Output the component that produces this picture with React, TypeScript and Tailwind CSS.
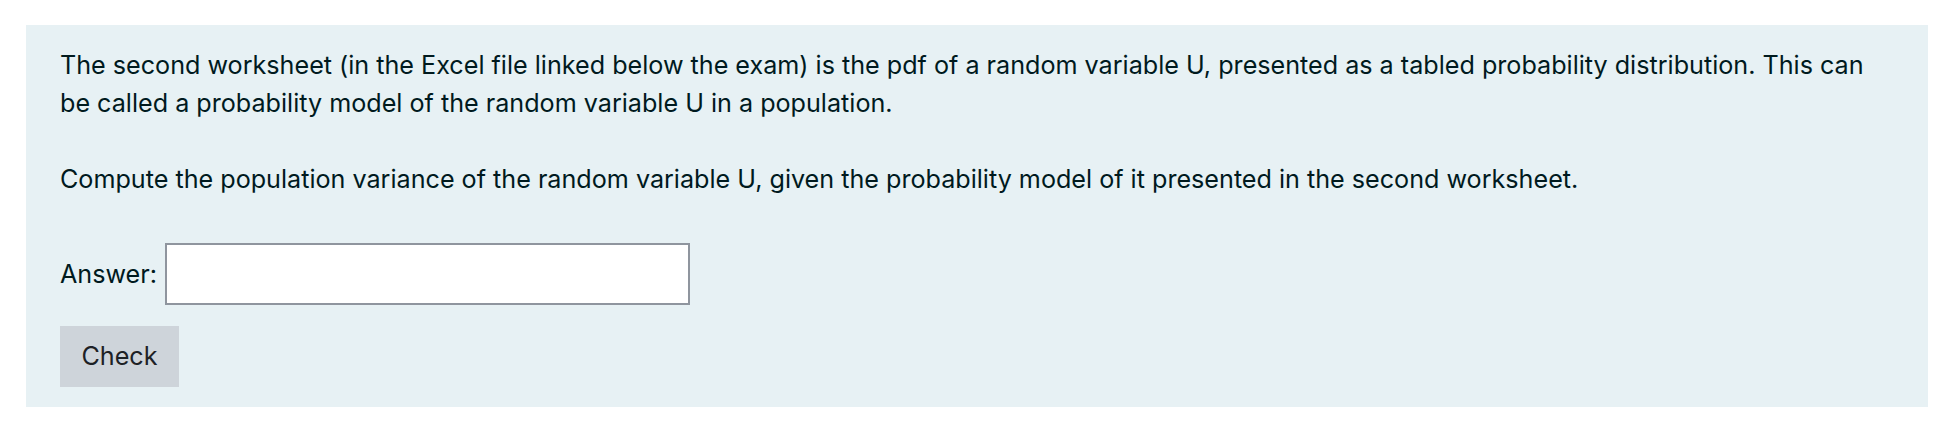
export default function App() {
  return (
    <div className="min-h-screen bg-white pt-[25px] pl-[26px] pr-[26px]" style={{ fontFamily: "Inter, 'Noto Sans', sans-serif" }}>
      <div className="w-[1902px] bg-[#e7f1f4] px-[34px] pt-[21px] pb-[20px] text-[#001a1e] text-[25.15px] leading-[38.25px]">
        <p>
          The second worksheet (in the Excel file linked below the exam) is the pdf of a random variable U, presented as a tabled probability distribution. This can be called a probability model of the random variable U in a population.
        </p>
        <p className="mt-[37px]">
          Compute the population variance of the random variable U, given the probability model of it presented in the second worksheet.
        </p>
        <div className="mt-[45px] flex items-center gap-[8px]">
          <label>Answer:</label>
          <input type="text" className="w-[525px] h-[62px] bg-white border-2 border-[#8f959e] outline-none" />
        </div>
        <button className="mt-[21px] h-[61px] w-[119px] bg-[#ced4da] text-[#1d2125]">Check</button>
      </div>
    </div>
  );
}
